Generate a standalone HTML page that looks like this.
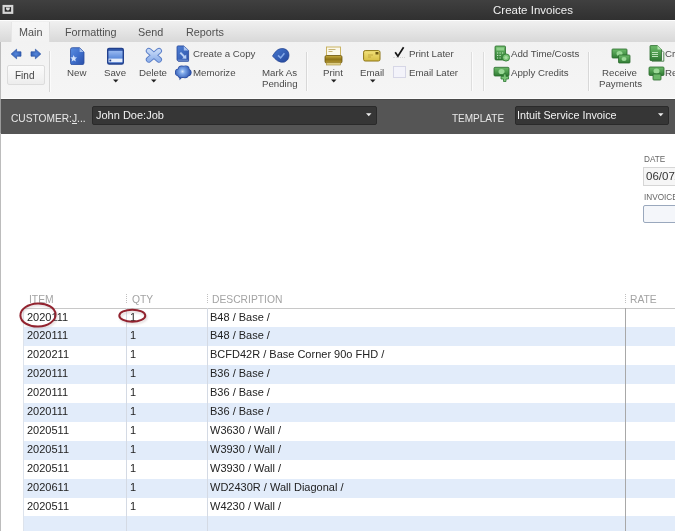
<!DOCTYPE html>
<html><head><meta charset="utf-8">
<style>
*{margin:0;padding:0;box-sizing:border-box}
html,body{width:675px;height:531px;overflow:hidden;background:#fff;font-family:"Liberation Sans",sans-serif}
.a{will-change:transform}
.a{position:absolute;white-space:nowrap}
#title{left:0;top:0;width:675px;height:20px;background:linear-gradient(#404040,#303030)}
#tabs{left:0;top:19.5px;width:675px;height:22.5px;background:linear-gradient(#f0f0f0,#d7d7d7);border-top:1.5px solid #fdfdfd}
#ribbon{left:0;top:42px;width:675px;height:57px;background:linear-gradient(#f2f2f2,#f5f5f5);border-bottom:1px solid #fcfcfc}
#cust{left:0;top:99px;width:675px;height:34.5px;background:#555;border-top:1px solid #4a4a4a}
.tab{font-size:10.8px;color:#505050;top:25.7px !important}
.lbl{font-size:9.7px;color:#4a4a4a}
.hdr{font-size:10.3px;color:#a3a3a3;top:293.6px !important}
.cell{font-size:11px;color:#222}
</style></head><body>
<!-- title -->
<div id="title" class="a"></div>
<svg class="a" style="left:0;top:0" width="20" height="20" viewBox="0 0 20 20"><rect x="3.6" y="6" width="8.6" height="6.8" fill="#2a2a2a" stroke="#d6d6d6" stroke-width="2.2"/><path d="M5.9 7.6H9.9Q9.9 10.6 7.9 10.6Q5.9 10.6 5.9 7.6Z" fill="#d8d8d8"/></svg>
<div class="a" style="left:493px;top:3.5px;font-size:11.5px;color:#f0f0f0">Create Invoices</div>
<!-- tabs -->
<div id="tabs" class="a"></div>
<div class="a" style="left:11px;top:22px;width:39px;height:20px;background:linear-gradient(#f6f6f6,#f2f2f2);border-left:1px solid #e6e6e6;border-right:1px solid #dedede"></div>
<div class="a tab" style="left:19px;top:25px">Main</div>
<div class="a tab" style="left:65px;top:25px">Formatting</div>
<div class="a tab" style="left:138px;top:25px">Send</div>
<div class="a tab" style="left:186px;top:25px">Reports</div>
<!-- ribbon -->
<div id="ribbon" class="a"></div>

<!-- nav arrows -->
<svg class="a" style="left:10px;top:48px" width="32" height="12" viewBox="0 0 32 12">
<defs><radialGradient id="ga" cx="0.5" cy="0.5" r="0.6"><stop offset="0" stop-color="#5688dc"/><stop offset="1" stop-color="#2c58ad"/></radialGradient></defs>
<path d="M1.2 6L6.6 1.2V3.8H11V8.2H6.6V10.8Z" fill="url(#ga)" stroke="#2b55a6" stroke-width="0.7" stroke-linejoin="round"/>
<path d="M30.8 6L25.4 1.2V3.8H21V8.2H25.4V10.8Z" fill="url(#ga)" stroke="#2b55a6" stroke-width="0.7" stroke-linejoin="round"/>
</svg>
<div class="a" style="left:7px;top:65px;width:38px;height:20px;background:linear-gradient(#fbfbfb,#ededed);border:1px solid #dcdcdc;border-radius:2px"></div>
<div class="a lbl" style="left:15px;top:69.5px;font-size:10px;color:#444">Find</div>
<div class="a" style="left:49px;top:51px;width:2px;height:40.5px;border-left:1px solid #d6d6d6;border-right:1px solid #fbfbfb"></div>
<!-- New -->
<svg class="a" style="left:70px;top:47px" width="15" height="18" viewBox="0 0 15 18">
<defs><linearGradient id="gb" x1="0" y1="0" x2="1" y2="1"><stop offset="0" stop-color="#5a8de0"/><stop offset="0.5" stop-color="#3f6fcc"/><stop offset="1" stop-color="#2a4fa8"/></linearGradient></defs>
<path d="M0.5 2.5Q0.5 0.7 2.3 0.7H9.6L14 5V15.8Q14 17.7 12.1 17.7H2.3Q0.5 17.7 0.5 15.8Z" fill="url(#gb)" stroke="#2a4c9e" stroke-width="0.8"/>
<path d="M9.6 0.9V5H13.8Z" fill="#9fbcec"/>
<path d="M3.70,8.10 L4.64,10.31 L7.03,10.52 L5.22,12.09 L5.76,14.43 L3.70,13.20 L1.64,14.43 L2.18,12.09 L0.37,10.52 L2.76,10.31Z" fill="#d4e3fb"/>
</svg>
<div class="a lbl" style="left:66.5px;top:67px">New</div>
<!-- Save -->
<svg class="a" style="left:106px;top:47px" width="19" height="18" viewBox="0 0 19 18">
<defs><linearGradient id="gs" x1="0" y1="0" x2="0" y2="1"><stop offset="0" stop-color="#2f56a8"/><stop offset="0.12" stop-color="#2f56a8"/><stop offset="0.2" stop-color="#93b5ef"/><stop offset="0.65" stop-color="#5a89da"/><stop offset="1" stop-color="#3b66c0"/></linearGradient></defs>
<rect x="1.7" y="1.4" width="15.6" height="15.6" rx="1.5" fill="url(#gs)" stroke="#22408c" stroke-width="1.4"/>
<rect x="2.6" y="11.6" width="13.8" height="3.6" fill="#e6eefb"/>
<rect x="3.4" y="12.6" width="1.8" height="1.8" fill="#22408c"/>
</svg>
<div class="a lbl" style="left:104px;top:67px">Save</div>
<svg class="a" style="left:113px;top:79px" width="6" height="4"><path d="M0 0.5H5.5L2.75 3.5Z" fill="#222"/></svg>
<!-- Delete -->
<svg class="a" style="left:145px;top:47px" width="18" height="18" viewBox="0 0 18 18">
<defs><linearGradient id="gx" x1="0" y1="0" x2="0" y2="1"><stop offset="0" stop-color="#c4d8f7"/><stop offset="1" stop-color="#93b3ea"/></linearGradient></defs>
<path d="M3.8 3.9L14 12.6M14 3.9L3.8 12.6" stroke="#5a7ec8" stroke-width="6" stroke-linecap="round"/>
<path d="M3.8 3.9L14 12.6M14 3.9L3.8 12.6" stroke="url(#gx)" stroke-width="4.2" stroke-linecap="round"/>
</svg>
<div class="a lbl" style="left:139px;top:67px">Delete</div>
<svg class="a" style="left:151px;top:79px" width="6" height="4"><path d="M0 0.5H5.5L2.75 3.5Z" fill="#222"/></svg>
<!-- Create a copy -->
<svg class="a" style="left:176px;top:45px" width="14" height="18" viewBox="0 0 14 18">
<defs><linearGradient id="gc" x1="0" y1="0" x2="1" y2="1"><stop offset="0" stop-color="#4f80d6"/><stop offset="1" stop-color="#2d52a8"/></linearGradient></defs>
<path d="M1 2Q1 0.9 2 0.9H7.8L12.6 5.4V15.6H2Q1 15.6 1 14.6Z" fill="url(#gc)" stroke="#27479a" stroke-width="0.8"/>
<path d="M7.8 1.1V5.4H12.4Z" fill="#a9c4f0"/>
<path d="M1.4 15.4H12.6V16.8H2.4Z" fill="#2a4c9f"/>
<path d="M2 15.2H12" stroke="#9fbcec" stroke-width="0.6"/>
<path d="M4.3 7.6L8.6 12" stroke="#b9d0f6" stroke-width="1.9"/>
<path d="M10.4 13.8L10.2 9.4L6.1 13.6Z" fill="#b9d0f6"/>
</svg>
<div class="a lbl" style="left:193px;top:48px">Create a Copy</div>
<!-- Memorize -->
<svg class="a" style="left:175px;top:65px" width="17" height="16" viewBox="0 0 17 16">
<defs><radialGradient id="gm" gradientUnits="userSpaceOnUse" cx="7.5" cy="6.5" r="8"><stop offset="0" stop-color="#d6e6fc"/><stop offset="0.3" stop-color="#7ea8ea"/><stop offset="1" stop-color="#3158b0"/></radialGradient></defs>
<path d="M4 10.5L4.6 15.2L8 11Z" fill="#2a4b9f"/>
<circle cx="3.8" cy="7.4" r="3.9000000000000004" fill="#2a4b9f"/><circle cx="6.8" cy="4.6" r="4.0" fill="#2a4b9f"/><circle cx="10.6" cy="4.4" r="4.0" fill="#2a4b9f"/><circle cx="13" cy="7.6" r="3.5999999999999996" fill="#2a4b9f"/><circle cx="10" cy="9.4" r="3.8" fill="#2a4b9f"/><circle cx="6" cy="9.6" r="3.7" fill="#2a4b9f"/><circle cx="3.8" cy="7.4" r="3.2" fill="url(#gm)"/><circle cx="6.8" cy="4.6" r="3.3" fill="url(#gm)"/><circle cx="10.6" cy="4.4" r="3.3" fill="url(#gm)"/><circle cx="13" cy="7.6" r="2.9" fill="url(#gm)"/><circle cx="10" cy="9.4" r="3.1" fill="url(#gm)"/><circle cx="6" cy="9.6" r="3" fill="url(#gm)"/>
</svg>
<div class="a lbl" style="left:193px;top:67px">Memorize</div>
<!-- Mark as pending -->
<svg class="a" style="left:272px;top:48px" width="18" height="15" viewBox="0 0 18 15">
<defs><linearGradient id="gp" x1="0" y1="0" x2="1" y2="1"><stop offset="0" stop-color="#4577cf"/><stop offset="1" stop-color="#25479c"/></linearGradient></defs>
<path d="M0.5 8Q3 3.5 6 1.6Q8.5 0.2 11.5 0.6Q16.8 1.8 17 7Q17 12 12.5 14Q9 15 5.5 12.8Q3 11 0.5 8Z" fill="url(#gp)" stroke="#203f8c" stroke-width="0.7"/>
<path d="M6 7.4L8.6 9.9L12.4 5.2" fill="none" stroke="#86abea" stroke-width="1.5"/>
</svg>
<div class="a lbl" style="left:262px;top:67px">Mark As</div>
<div class="a lbl" style="left:262px;top:78px">Pending</div>
<div class="a" style="left:306px;top:51.5px;width:2px;height:39px;border-left:1px solid #d8d8d8;border-right:1px solid #fbfbfb"></div>
<!-- Print -->
<svg class="a" style="left:324px;top:46px" width="20" height="20" viewBox="0 0 20 20">
<defs><linearGradient id="gpr" x1="0" y1="0" x2="0" y2="1"><stop offset="0" stop-color="#c9ae3f"/><stop offset="0.5" stop-color="#8f7418"/><stop offset="1" stop-color="#b29631"/></linearGradient></defs>
<rect x="2.5" y="1" width="14" height="9" fill="#fbf8ea" stroke="#c5ad55" stroke-width="0.9"/>
<path d="M4.5 3.5h7M4.5 5.5h4" stroke="#b8a25a" stroke-width="0.8"/>
<rect x="1" y="9.5" width="17" height="7.5" rx="1.5" fill="url(#gpr)" stroke="#6b5510" stroke-width="0.8"/>
<rect x="2.5" y="16.8" width="14" height="2.2" fill="#e3d38d" stroke="#a58d35" stroke-width="0.6"/>
</svg>
<div class="a lbl" style="left:323px;top:67px">Print</div>
<svg class="a" style="left:331px;top:79px" width="6" height="4"><path d="M0 0.5H5.5L2.75 3.5Z" fill="#222"/></svg>
<!-- Email -->
<svg class="a" style="left:363px;top:50px" width="18" height="12" viewBox="0 0 18 12">
<defs><linearGradient id="ge" x1="0" y1="0" x2="0" y2="1"><stop offset="0" stop-color="#f3e27a"/><stop offset="1" stop-color="#d6be45"/></linearGradient></defs>
<rect x="0.6" y="0.6" width="16.4" height="10.4" rx="1.6" fill="url(#ge)" stroke="#8d7516" stroke-width="1"/>
<rect x="12.5" y="2" width="3" height="2.5" fill="#6e5a12"/>
<path d="M5 5h5M5 7h3" stroke="#b49a30" stroke-width="0.7"/>
</svg>
<div class="a lbl" style="left:359.5px;top:67px">Email</div>
<svg class="a" style="left:370px;top:79px" width="6" height="4"><path d="M0 0.5H5.5L2.75 3.5Z" fill="#222"/></svg>
<!-- checkboxes -->
<div class="a" style="left:393px;top:47px;width:12px;height:11px;border-bottom:1px dotted #d4d4d4"></div>
<svg class="a" style="left:394px;top:46px" width="11" height="12" viewBox="0 0 11 12"><path d="M1.2 6.2L3.9 10.2L9.6 1.2" fill="none" stroke="#151515" stroke-width="1.7" stroke-linejoin="miter"/></svg>
<div class="a lbl" style="left:409px;top:47.6px">Print Later</div>
<div class="a" style="left:393px;top:66px;width:13px;height:12px;border:1px solid #d6d6e6;background:#f3f3fa"></div>
<div class="a lbl" style="left:409px;top:66.6px">Email Later</div>
<div class="a" style="left:471px;top:51.5px;width:2px;height:39px;border-left:1px solid #dedede;border-right:1px solid #fbfbfb"></div>
<div class="a" style="left:483px;top:51.5px;width:2px;height:39px;border-left:1px solid #dcdcdc;border-right:1px solid #fbfbfb"></div>
<!-- Add time/costs -->
<svg class="a" style="left:494px;top:45px" width="16" height="17" viewBox="0 0 16 17">
<defs><linearGradient id="gg" x1="0" y1="0" x2="0" y2="1"><stop offset="0" stop-color="#6dbb6a"/><stop offset="1" stop-color="#2f7a33"/></linearGradient></defs>
<rect x="1" y="1" width="10.5" height="14" rx="1" fill="url(#gg)" stroke="#2a6a2c" stroke-width="0.8"/>
<rect x="2.5" y="2.5" width="7.5" height="3" fill="#8fd08b"/>
<path d="M3 8h1.2M5.5 8h1.2M8 8h1.2M3 10.5h1.2M5.5 10.5h1.2M3 13h1.2M5.5 13h1.2" stroke="#cdeccc" stroke-width="1"/>
<circle cx="12" cy="12.5" r="3.6" fill="#7fc77b" stroke="#2f7a33" stroke-width="0.9"/>
<circle cx="12" cy="12.5" r="1.6" fill="#a8dca4"/>
</svg>
<div class="a lbl" style="left:511px;top:48px">Add Time/Costs</div>
<!-- Apply credits -->
<svg class="a" style="left:493px;top:66px" width="17" height="16" viewBox="0 0 17 16">
<rect x="1" y="1.3" width="15" height="8.7" rx="1" fill="url(#gg)" stroke="#2a6a2c" stroke-width="0.8"/>
<ellipse cx="8.5" cy="5.5" rx="3" ry="2.6" fill="#9ad896"/>
<path d="M10.5 8H13V10.5H15.5V13H13V15.5H10.5V13H8V10.5H10.5Z" fill="#7cc579" stroke="#2f7a33" stroke-width="0.8"/>
</svg>
<div class="a lbl" style="left:511px;top:67px">Apply Credits</div>
<div class="a" style="left:588px;top:51.5px;width:2px;height:39px;border-left:1px solid #d8d8d8;border-right:1px solid #fbfbfb"></div>
<!-- Receive payments -->
<svg class="a" style="left:611px;top:48px" width="20" height="16" viewBox="0 0 20 16">
<rect x="1" y="1" width="15" height="9" rx="0.8" fill="url(#gg)" stroke="#2a6a2c" stroke-width="0.8"/>
<ellipse cx="8.5" cy="5.5" rx="3" ry="2.5" fill="#9ad896"/>
<rect x="7.5" y="7" width="11.5" height="8" rx="0.8" fill="url(#gg)" stroke="#2a6a2c" stroke-width="0.8"/>
<ellipse cx="13" cy="11" rx="2.5" ry="2" fill="#9ad896"/>
</svg>
<div class="a lbl" style="left:602px;top:67px">Receive</div>
<div class="a lbl" style="left:599px;top:78px">Payments</div>
<!-- Cr / Re -->
<svg class="a" style="left:649px;top:45px" width="16" height="17" viewBox="0 0 16 17">
<path d="M1 1.2Q1 0.6 1.6 0.6H8.5L12.5 4.6V15.5H1.6Q1 15.5 1 14.9Z" fill="url(#gg)" stroke="#2a6a2c" stroke-width="0.8"/>
<path d="M8.5 0.6V4.6H12.5Z" fill="#b4e2b1"/>
<path d="M3 7.5h6M3 9.5h6M3 11.5h6" stroke="#c8eac6" stroke-width="0.9"/>
<path d="M13 5.5L14.8 7.3V16.2H3V15.5" fill="none" stroke="#2a6a2c" stroke-width="0.8"/>
</svg>
<div class="a lbl" style="left:665px;top:48px">Cr</div>
<svg class="a" style="left:648px;top:66px" width="17" height="15" viewBox="0 0 17 15">
<rect x="1" y="1" width="15" height="8.5" rx="1" fill="url(#gg)" stroke="#2a6a2c" stroke-width="0.8"/>
<ellipse cx="8.5" cy="5" rx="3" ry="2.5" fill="#9ad896"/>
<rect x="5" y="8" width="8" height="6" rx="0.8" fill="#6cb869" stroke="#2a6a2c" stroke-width="0.8"/>
</svg>
<div class="a lbl" style="left:665px;top:67px">Re</div>
<!-- customer bar -->
<div id="cust" class="a"></div>
<div class="a" style="left:11px;top:112.7px;font-size:10.2px;color:#e8e8e8">CUSTOMER:<span style="text-decoration:underline">J</span>...</div>
<div class="a" style="left:92px;top:105.8px;width:285px;height:18.8px;background:#363636;border:1px solid #2a2a2a;border-radius:2px"></div>
<div class="a" style="left:95.5px;top:108.8px;font-size:11px;color:#f2f2f2">John Doe:Job</div>
<svg class="a" style="left:366px;top:113px" width="6" height="4"><path d="M0 0.3H5.5L2.75 3.3Z" fill="#eee"/></svg>
<div class="a" style="left:452px;top:113px;font-size:10px;color:#e8e8e8">TEMPLATE</div>
<div class="a" style="left:515px;top:105.8px;width:154px;height:18.8px;background:#363636;border:1px solid #2a2a2a;border-radius:2px"></div>
<div class="a" style="left:517px;top:108.5px;font-size:10.8px;color:#f2f2f2">Intuit Service Invoice</div>
<svg class="a" style="left:657.8px;top:113.3px" width="6" height="4"><path d="M0 0.3H5.5L2.75 3.3Z" fill="#eee"/></svg>

<!-- body -->
<div class="a" style="left:0;top:42px;width:1px;height:489px;background:#bcbcbc"></div><div class="a" style="left:0;top:99px;width:1px;height:34px;background:#9a9a9a"></div>
<div class="a" style="left:643.5px;top:155.3px;font-size:8.2px;color:#666">DATE</div>
<div class="a" style="left:643px;top:167px;width:40px;height:19px;background:#f6f6f6;border:1px solid #d6d6d6;border-right:none"></div>
<div class="a" style="left:646px;top:169.5px;font-size:11.5px;color:#333">06/07/</div>
<div class="a" style="left:643.5px;top:193.3px;font-size:8.2px;color:#666">INVOICE #</div>
<div class="a" style="left:643px;top:205px;width:40px;height:18px;background:#f4f6fa;border:1px solid #9aa8bd;border-radius:2px"></div>
<!-- table -->
<div class="a hdr" style="left:29px;top:293px">ITEM</div>
<div class="a hdr" style="left:132px;top:293px">QTY</div>
<div class="a hdr" style="left:212px;top:293px">DESCRIPTION</div>
<div class="a hdr" style="left:630px;top:293px">RATE</div>
<div class="a" style="left:126px;top:294px;height:9px;border-left:1px dotted #c0c0c0"></div>
<div class="a" style="left:207px;top:294px;height:9px;border-left:1px dotted #c0c0c0"></div>
<div class="a" style="left:625px;top:294px;height:9px;border-left:1px dotted #c0c0c0"></div>
<div class="a" style="left:23px;top:307.5px;width:652px;height:1px;background:#c8c8c8"></div>
<div class="a" style="left:23px;top:308.50px;width:652px;height:18.9px;background:#ffffff"></div>
<div class="a" style="left:23px;top:327.40px;width:652px;height:18.9px;background:#e2ecfa"></div>
<div class="a" style="left:23px;top:346.30px;width:652px;height:18.9px;background:#ffffff"></div>
<div class="a" style="left:23px;top:365.20px;width:652px;height:18.9px;background:#e2ecfa"></div>
<div class="a" style="left:23px;top:384.10px;width:652px;height:18.9px;background:#ffffff"></div>
<div class="a" style="left:23px;top:403.00px;width:652px;height:18.9px;background:#e2ecfa"></div>
<div class="a" style="left:23px;top:421.90px;width:652px;height:18.9px;background:#ffffff"></div>
<div class="a" style="left:23px;top:440.80px;width:652px;height:18.9px;background:#e2ecfa"></div>
<div class="a" style="left:23px;top:459.70px;width:652px;height:18.9px;background:#ffffff"></div>
<div class="a" style="left:23px;top:478.60px;width:652px;height:18.9px;background:#e2ecfa"></div>
<div class="a" style="left:23px;top:497.50px;width:652px;height:18.9px;background:#ffffff"></div>
<div class="a" style="left:23px;top:516.40px;width:652px;height:18.9px;background:#e2ecfa"></div>
<div class="a cell" style="left:27px;top:310.50px">2020111</div><div class="a cell" style="left:130.3px;top:310.50px">1</div><div class="a cell" style="left:210.3px;top:310.50px">B48 / Base /</div>
<div class="a cell" style="left:27px;top:329.40px">2020111</div><div class="a cell" style="left:130.3px;top:329.40px">1</div><div class="a cell" style="left:210.3px;top:329.40px">B48 / Base /</div>
<div class="a cell" style="left:27px;top:348.30px">2020211</div><div class="a cell" style="left:130.3px;top:348.30px">1</div><div class="a cell" style="left:210.3px;top:348.30px">BCFD42R / Base Corner 90o FHD /</div>
<div class="a cell" style="left:27px;top:367.20px">2020111</div><div class="a cell" style="left:130.3px;top:367.20px">1</div><div class="a cell" style="left:210.3px;top:367.20px">B36 / Base /</div>
<div class="a cell" style="left:27px;top:386.10px">2020111</div><div class="a cell" style="left:130.3px;top:386.10px">1</div><div class="a cell" style="left:210.3px;top:386.10px">B36 / Base /</div>
<div class="a cell" style="left:27px;top:405.00px">2020111</div><div class="a cell" style="left:130.3px;top:405.00px">1</div><div class="a cell" style="left:210.3px;top:405.00px">B36 / Base /</div>
<div class="a cell" style="left:27px;top:423.90px">2020511</div><div class="a cell" style="left:130.3px;top:423.90px">1</div><div class="a cell" style="left:210.3px;top:423.90px">W3630 / Wall /</div>
<div class="a cell" style="left:27px;top:442.80px">2020511</div><div class="a cell" style="left:130.3px;top:442.80px">1</div><div class="a cell" style="left:210.3px;top:442.80px">W3930 / Wall /</div>
<div class="a cell" style="left:27px;top:461.70px">2020511</div><div class="a cell" style="left:130.3px;top:461.70px">1</div><div class="a cell" style="left:210.3px;top:461.70px">W3930 / Wall /</div>
<div class="a cell" style="left:27px;top:480.60px">2020611</div><div class="a cell" style="left:130.3px;top:480.60px">1</div><div class="a cell" style="left:210.3px;top:480.60px">WD2430R / Wall Diagonal /</div>
<div class="a cell" style="left:27px;top:499.50px">2020511</div><div class="a cell" style="left:130.3px;top:499.50px">1</div><div class="a cell" style="left:210.3px;top:499.50px">W4230 / Wall /</div>
<div class="a" style="left:23px;top:308px;width:1px;height:223px;background:#dde3ec"></div>
<div class="a" style="left:126px;top:308px;width:1px;height:223px;background:#d4dae4"></div>
<div class="a" style="left:207px;top:308px;width:1px;height:223px;background:#d4dae4"></div>
<div class="a" style="left:625px;top:308px;width:1px;height:223px;background:#a8a8a8"></div>
<!-- annotations -->
<svg class="a" style="left:0;top:280px" width="200" height="60" viewBox="0 0 200 60">
<defs><filter id="sh" x="-20%" y="-20%" width="140%" height="140%"><feGaussianBlur stdDeviation="0.9"/></filter></defs>
<ellipse cx="39" cy="36.5" rx="17.5" ry="11.5" fill="none" stroke="#b9a9ab" stroke-width="1.5" filter="url(#sh)" opacity="0.6"/>
<ellipse cx="133.5" cy="37.5" rx="13" ry="5.8" fill="none" stroke="#b9a9ab" stroke-width="1.5" filter="url(#sh)" opacity="0.6"/>
<ellipse cx="38" cy="35" rx="17.6" ry="11.6" fill="none" stroke="#92232f" stroke-width="2" transform="rotate(-2 38 35)"/>
<ellipse cx="132.3" cy="35.7" rx="13" ry="6" fill="none" stroke="#92232f" stroke-width="2"/>
</svg>
</body></html>
